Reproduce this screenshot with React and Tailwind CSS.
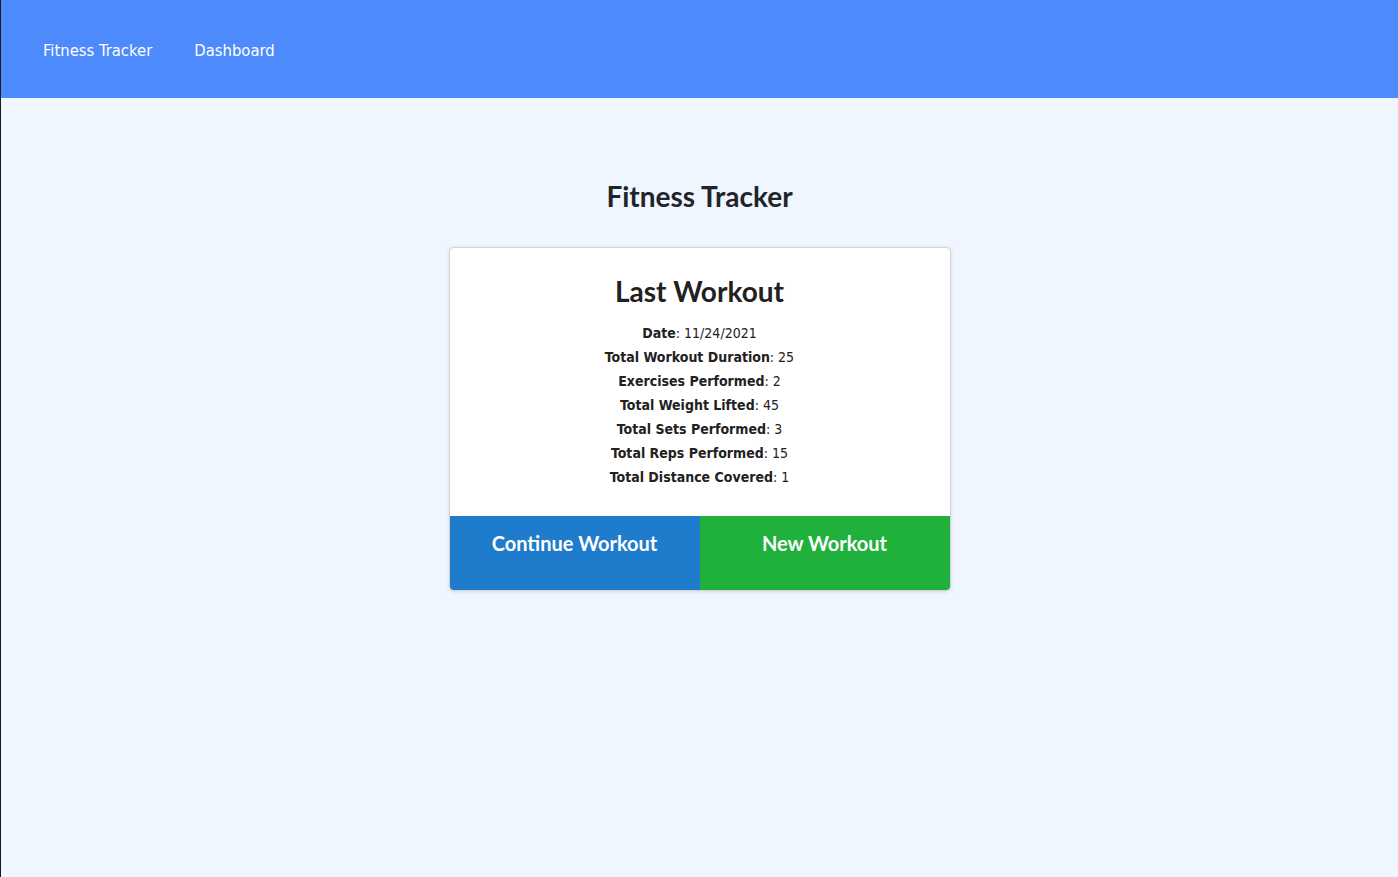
export default function App() {
  const stats = [
    ["Date", "11/24/2021"],
    ["Total Workout Duration", "25"],
    ["Exercises Performed", "2"],
    ["Total Weight Lifted", "45"],
    ["Total Sets Performed", "3"],
    ["Total Reps Performed", "15"],
    ["Total Distance Covered", "1"],
  ];
  const tahoma = { fontFamily: "Tahoma, 'DejaVu Sans Condensed', 'DejaVu Sans', sans-serif" };
  return (
    <div className="min-h-[877px] bg-[#eff6ff] border-l border-[#1a1a1a]">
      <nav className="h-[98px] bg-[#4d8afc] flex items-center gap-[42px] px-[42px] pt-[4px] text-white text-[16.5px]" style={tahoma}>
        <span className="[font-stretch:semi-condensed]">Fitness Tracker</span>
        <span className="[font-stretch:semi-condensed]">Dashboard</span>
      </nav>
      <main className="flex flex-col items-center pt-[78px]" style={{ fontFamily: "Lato, sans-serif" }}>
        <h1 className="text-[28px] font-bold text-[#212529] leading-[40px]">Fitness Tracker</h1>
        <div className="mt-[31px] w-[502px] bg-white border border-[#d4d4d4] rounded-[5px] shadow-[0_1px_4px_rgba(0,0,0,0.12)] overflow-hidden">
          <div className="pt-[23px] pb-[27px] flex flex-col items-center">
            <h2 className="text-[28px] font-bold text-[#212121] leading-[40px]">Last Workout</h2>
            <div className="mt-[10px] flex flex-col items-center text-[14px] text-[#212121] leading-[24px] [font-stretch:semi-condensed]" style={tahoma}>
              {stats.map(([k, v]) => (
                <div key={k}>
                  <span className="font-bold">{k}</span>: {v}
                </div>
              ))}
            </div>
          </div>
          <div className="grid grid-cols-2 h-[74px]">
            <button className="bg-[#1f7bcc] text-white font-bold text-[20px] pt-[14px] leading-[26px] flex justify-center items-start">Continue Workout</button>
            <button className="bg-[#20b13c] text-white font-bold text-[20px] pt-[14px] leading-[26px] flex justify-center items-start">New Workout</button>
          </div>
        </div>
      </main>
    </div>
  );
}
